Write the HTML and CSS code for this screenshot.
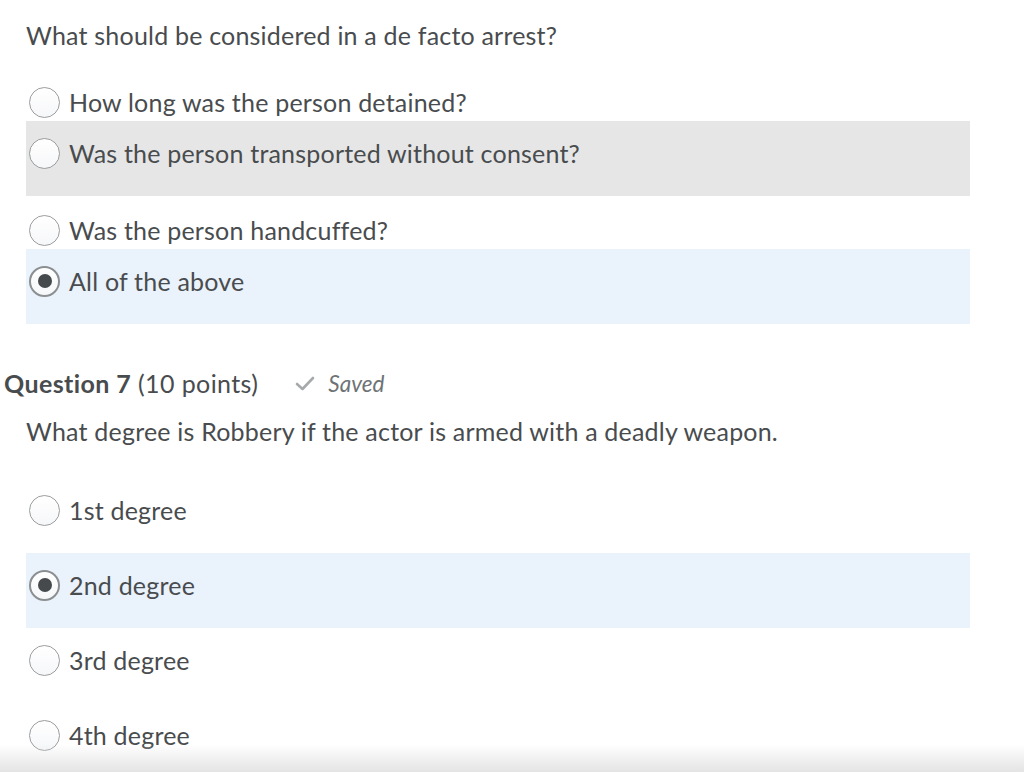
FILE: index.html
```html
<!DOCTYPE html>
<html>
<head>
<meta charset="utf-8">
<link rel="stylesheet" href="styles.css">
</head>
<body>
<div class="page">
  <section class="question q6">
    <div class="qtext">What should be considered in a de facto arrest?</div>
    <div class="options">
      <label class="opt compact"><span class="radio"></span><span class="otext">How long was the person detained?</span></label>
      <label class="opt hover"><span class="radio"></span><span class="otext">Was the person transported without consent?</span></label>
      <label class="opt compact"><span class="radio"></span><span class="otext">Was the person handcuffed?</span></label>
      <label class="opt selected"><span class="radio on"></span><span class="otext">All of the above</span></label>
    </div>
  </section>
  <section class="question q7">
    <div class="qhead">
      <span class="qtitle"><b>Question 7</b> (10 points)</span>
      <span class="saved">
        <svg class="check" width="20" height="15" viewBox="0 0 20 15"><path d="M2 8 L7.5 13 L18 2" fill="none" stroke="#a7aaac" stroke-width="2.6" stroke-linecap="round" stroke-linejoin="round"/></svg>
        <i>Saved</i>
      </span>
    </div>
    <div class="qtext">What degree is Robbery if the actor is armed with a deadly weapon.</div>
    <div class="options">
      <label class="opt"><span class="radio"></span><span class="otext">1st degree</span></label>
      <label class="opt selected"><span class="radio on"></span><span class="otext">2nd degree</span></label>
      <label class="opt"><span class="radio"></span><span class="otext">3rd degree</span></label>
      <label class="opt"><span class="radio"></span><span class="otext">4th degree</span></label>
    </div>
  </section>
</div>
<div class="bottom-fade"></div>
</body>
</html>
```
FILE: styles.css
```css
html, body {
  margin: 0;
  padding: 0;
  background: #ffffff;
  overflow: hidden;
}
body {
  font-family: Lato, "Open Sans", "Liberation Sans", sans-serif;
  color: #494c4e;
  width: 1024px;
  height: 772px;
  position: relative;
}
.page {
  padding-left: 26px;
  width: 944px;
}
.qtext {
  font-size: 25px;
  letter-spacing: 0.2px;
  line-height: 30px;
}
.q6 .qtext {
  padding-top: 20px;
  padding-bottom: 18px;
}
.options {
  display: flex;
  flex-direction: column;
}
.opt {
  display: flex;
  align-items: center;
  gap: 9px;
  padding: 17px 0 28px 3px;
  height: 30px;
  font-size: 25px;
  letter-spacing: 0.2px;
  line-height: 30px;
}
.opt.compact {
  padding-top: 19px;
  padding-bottom: 4px;
}
.opt.hover {
  background: #e6e6e6;
}
.opt.selected {
  background: #eaf2fb;
}
.radio {
  box-sizing: border-box;
  width: 31px;
  height: 31px;
  border-radius: 50%;
  border: 1.5px solid #9a9c9e;
  background: linear-gradient(#ffffff, #f6f7f9);
  flex: none;
  display: flex;
  align-items: center;
  justify-content: center;
}
.radio.on {
  border: 2px solid #8c8f91;
}
.radio.on::after {
  content: "";
  width: 14px;
  height: 14px;
  border-radius: 50%;
  background: #464a4c;
}
.q7 {
  padding-top: 44px;
}
.qhead {
  margin-left: -22px;
  display: flex;
  align-items: center;
  gap: 37px;
  height: 30px;
}
.qtitle {
  font-size: 25px;
  letter-spacing: 0.4px;
  line-height: 30px;
}
.qtitle b {
  font-weight: 700;
}
.saved {
  display: flex;
  align-items: center;
  gap: 13px;
  color: #6e7376;
  font-size: 22.5px;
}
.q7 .qtext {
  padding-top: 18px;
  padding-bottom: 32px;
}
.bottom-fade {
  position: absolute;
  left: 0;
  right: 0;
  bottom: 0;
  height: 28px;
  background: linear-gradient(rgba(232,232,232,0), rgba(228,228,228,1));
}
```
